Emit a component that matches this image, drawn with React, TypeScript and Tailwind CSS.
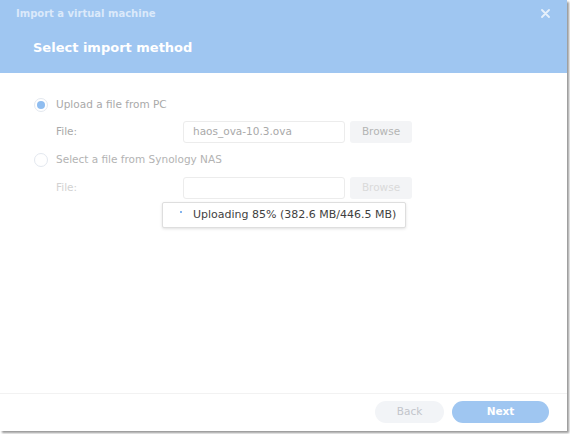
import React from 'react';

const font = { fontFamily: '"DejaVu Sans", Verdana, sans-serif' };

function Radio({ checked }: { checked?: boolean }) {
  return (
    <span className="flex h-[14px] w-[14px] items-center justify-center rounded-full border border-[#e3e8ef] bg-white">
      {checked && <span className="h-[8px] w-[8px] rounded-full bg-[#8fbdf0]" />}
    </span>
  );
}

function FileRow({ value, disabled }: { value?: string; disabled?: boolean }) {
  return (
    <div className="flex items-center">
      <span className={`w-[149px] pl-[22px] text-[10.5px] ${disabled ? 'text-[#d2d2d2]' : 'text-[#a9a9a9]'}`}>File:</span>
      <div className="flex h-[22px] w-[162px] items-center rounded-[3px] border border-[#ececec] bg-white px-[9px] text-[10.5px] text-[#a9a9a9]">
        {value}
      </div>
      <div className={`ml-[5px] flex h-[22px] w-[62px] items-center justify-center rounded-[3px] bg-[#f3f4f6] text-[10.5px] ${disabled ? 'text-[#dadada]' : 'text-[#b4b4b4]'}`}>
        Browse
      </div>
    </div>
  );
}

export default function App() {
  return (
    <div className="h-[434px] w-[570px] bg-white" style={font}>
      <div className="relative flex h-[431px] w-[567px] flex-col bg-white shadow-[2px_2px_2px_rgba(0,0,0,0.4)]">
        {/* header */}
        <div className="h-[73px] bg-[#9fc6f1] px-[16px] pt-[5px]">
          <div className="flex h-[16px] items-center justify-between">
            <span className="text-[10px] font-bold text-[#dbe9fa]">Import a virtual machine</span>
            <svg width="9" height="9" viewBox="0 0 9 9" className="mr-[1px]">
              <path d="M1 1L8 8M8 1L1 8" stroke="#e6f0fb" strokeWidth="1.8" strokeLinecap="round" />
            </svg>
          </div>
          <div className="mt-[17px] pl-[17px] text-[13px] font-bold text-white">Select import method</div>
        </div>

        {/* body */}
        <div className="flex-1 px-[34px] pt-[22px]">
          <div className="flex h-[20px] items-center gap-[8px]">
            <Radio checked />
            <span className="text-[10.5px] text-[#a9a9a9]">Upload a file from PC</span>
          </div>
          <div className="mt-[6px]">
            <FileRow value="haos_ova-10.3.ova" />
          </div>
          <div className="mt-[7px] flex h-[20px] items-center gap-[8px]">
            <Radio />
            <span className="text-[10.5px] text-[#b3b3b3]">Select a file from Synology NAS</span>
          </div>
          <div className="mt-[7px]">
            <FileRow disabled />
          </div>
        </div>

        {/* uploading popup */}
        <div className="absolute left-[162px] top-[202px] flex h-[26px] w-[244px] items-center rounded-[2px] border border-[#dedede] bg-white shadow-[0_1px_3px_rgba(0,0,0,0.12)]">
          <span className="ml-[17px] mb-[6px] h-[2px] w-[2px] rounded-full bg-[#5b9be8]" />
          <span className="ml-[11px] text-[11px] text-[#3f3f3f]">Uploading 85% (382.6 MB/446.5 MB)</span>
        </div>

        {/* footer */}
        <div className="flex h-[38px] items-start justify-end gap-[8px] border-t border-[#f2f2f2] pr-[18px] pt-[7px]">
          <div className="flex h-[22px] w-[69px] items-center justify-center rounded-full bg-[#f2f4f7] text-[10.5px] text-[#c2c5cb]">
            Back
          </div>
          <div className="flex h-[22px] w-[97px] items-center justify-center rounded-full bg-[#9fc6f1] text-[10.5px] font-bold text-white">
            Next
          </div>
        </div>
      </div>
    </div>
  );
}
